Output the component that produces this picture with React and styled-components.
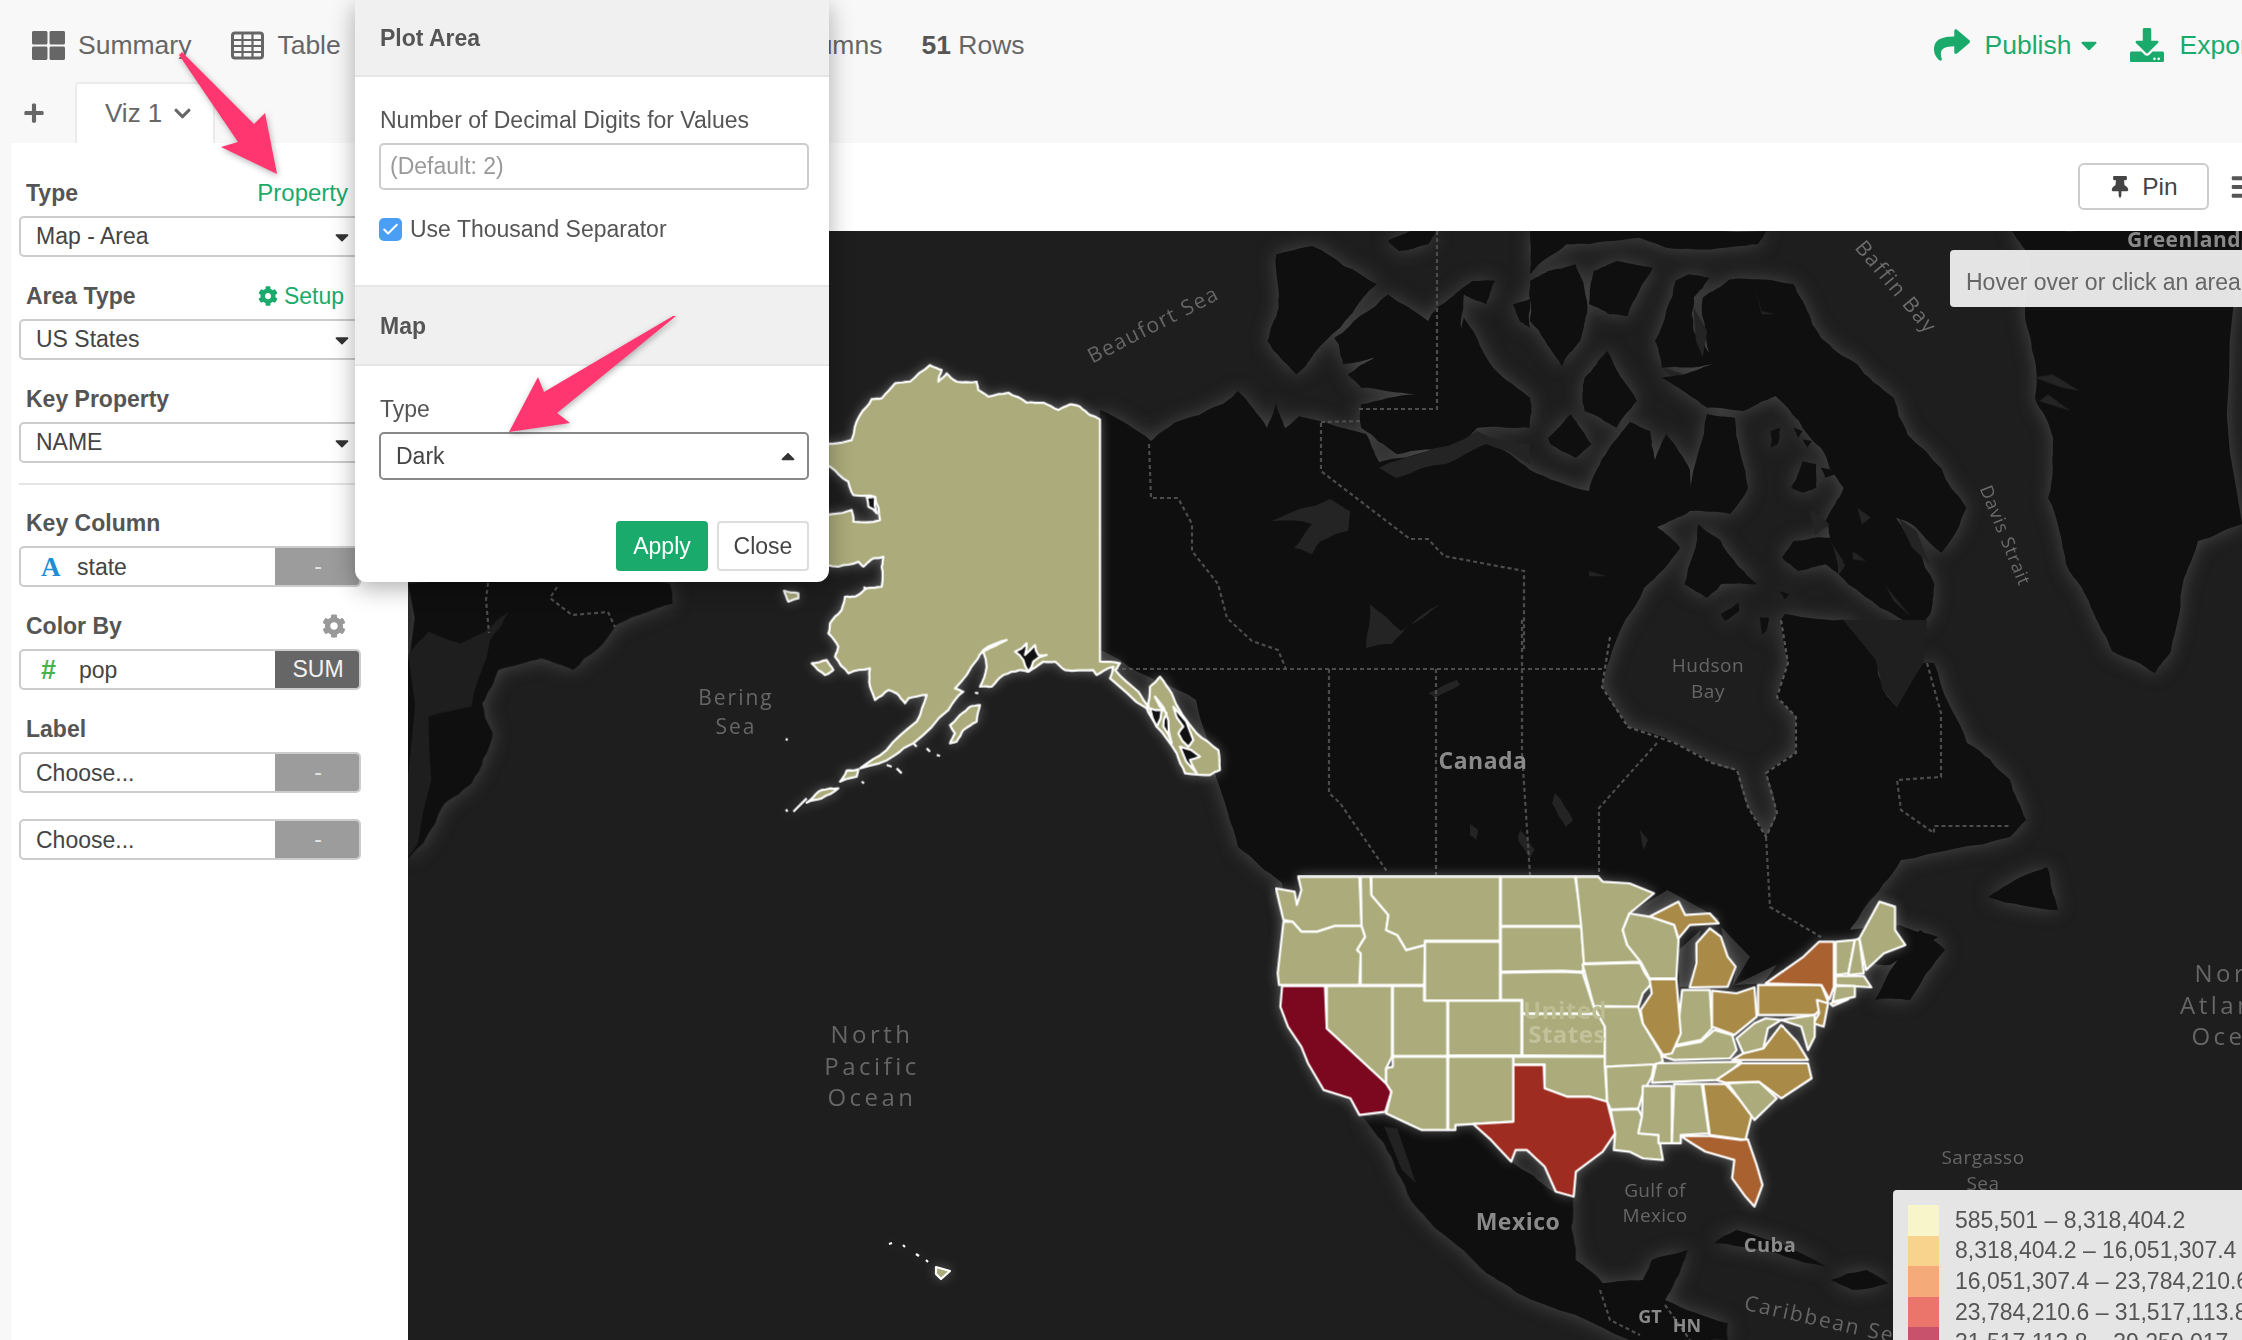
import React from "react";
import styled, { createGlobalStyle } from "styled-components";
import {
  FaThLarge, FaPlus, FaChevronDown, FaShare, FaCaretDown, FaCaretUp,
  FaDownload, FaCog, FaThumbtack, FaBars,
} from "react-icons/fa";
import { Check } from "lucide-react";

const GREEN = "#1aab6c";

const Global = createGlobalStyle`
  html, body { margin: 0; padding: 0; background: #f8f8f8; }
  body { font-family: "Liberation Sans", Arial, sans-serif; overflow: hidden; }
  * { box-sizing: border-box; }
`;

const Page = styled.div`
  position: relative;
  width: 2242px;
  height: 1340px;
  overflow: hidden;
  display: flex;
  flex-direction: column;
  background: #f8f8f8;
`;

/* ---------- top bars ---------- */
const TopBar = styled.header`
  height: 82px;
  flex: none;
  display: flex;
  align-items: center;
  padding: 8px 0 0 32px;
  font-size: 26.5px;
  color: #666;
  white-space: nowrap;
`;
const NavItem = styled.div`
  display: flex;
  align-items: center;
  gap: 13px;
  margin-right: 40px;
  svg { width: 33px; height: 33px; color: #666; flex: none; }
`;
const Stats = styled.div`
  display: flex;
  gap: 39px;
  margin-left: 375px;
  b { color: #555; }
`;
const RightActions = styled.div`
  display: flex;
  gap: 28px;
  flex: none;
  margin-left: 909px;
  color: ${GREEN};
`;
const ActionItem = styled.div`
  display: flex;
  align-items: center;
  gap: 15px;
`;
const ShareIcon = styled(FaShare)`
  font-size: 36px;
`;
const DownloadIcon = styled(FaDownload)`
  font-size: 34px;
`;
const PublishCaret = styled(FaCaretDown)`
  font-size: 26px;
  margin-left: -10px;
`;
const TabRow = styled.div`
  height: 61px;
  flex: none;
  display: flex;
  align-items: flex-end;
  padding-left: 23px;
`;
const AddTab = styled.div`
  width: 52px;
  height: 60px;
  display: flex;
  align-items: center;
  color: #666;
  font-size: 22px;
`;
const Tab = styled.div`
  width: 140px;
  height: 61px;
  display: flex;
  align-items: center;
  gap: 11px;
  padding-left: 28px;
  background: #fff;
  border: 2px solid #ebebeb;
  border-bottom: none;
  border-radius: 4px 4px 0 0;
  font-size: 26px;
  color: #666;
  svg { font-size: 19px; }
`;
const Body = styled.div`
  flex: 1;
  display: flex;
  margin-left: 11px;
  min-height: 0;
`;

/* ---------- sidebar ---------- */
const Sidebar = styled.aside`
  width: 397px;
  flex: none;
  background: #fff;
  padding: 35px 0 0 8px;
  display: flex;
  flex-direction: column;
  gap: 24px;
`;
const Field = styled.div`
  display: flex;
  flex-direction: column;
  gap: 8px;
  width: 342px;
  margin-top: ${(p) => p.$mt || 0}px;
`;
const LabelRow = styled.div`
  height: 30px;
  display: flex;
  align-items: center;
  justify-content: space-between;
  padding: 0 ${(p) => p.$pad || 5}px 0 7px;
`;
const FieldLabel = styled.span`
  font-size: 23px;
  font-weight: 700;
  color: #555;
`;
const GreenLink = styled.span`
  display: flex;
  align-items: center;
  gap: 6px;
  font-size: ${(p) => p.$size || 23}px;
  color: ${GREEN};
  svg { font-size: 20px; }
`;
const GearGrey = styled.span`
  display: flex;
  color: #999;
  font-size: 24px;
`;
const SelectBox = styled.div`
  height: 41px;
  display: flex;
  align-items: center;
  justify-content: space-between;
  padding: 0 6px 0 15px;
  background: #fff;
  border: 2px solid #ccc;
  border-radius: 5px;
  font-size: 23px;
  color: #444;
  svg { font-size: 22px; color: #333; }
`;
const Divider = styled.hr`
  width: 342px;
  height: 2px;
  margin: -4px 0 -1px;
  border: 0;
  background: #e5e5e5;
`;
const Group = styled.div`
  height: 41px;
  display: flex;
  border: 2px solid #ccc;
  border-radius: 5px;
  font-size: 23px;
  color: #444;
  overflow: hidden;
`;
const GroupMain = styled.div`
  flex: 1;
  display: flex;
  align-items: center;
  padding: 1px 0 0 ${(p) => (p.$type ? 20 : 15)}px;
  gap: 16px;
`;
const GroupAddon = styled.div`
  width: 86px;
  margin: -2px -2px -2px 0;
  display: flex;
  align-items: center;
  justify-content: center;
  background: ${(p) => (p.$dark ? "#666" : "#9c9c9c")};
  color: ${(p) => (p.$dark ? "#f2f2f2" : "#e4e4e4")};
`;
const TypeA = styled.span`
  font-family: "Liberation Serif", serif;
  font-weight: 700;
  font-size: 27px;
  color: #1e8fd6;
  width: 20px;
`;
const TypeHash = styled.span`
  font-weight: 700;
  font-size: 27px;
  color: #46b24c;
  width: 22px;
`;

/* ---------- main column ---------- */
const Main = styled.main`
  flex: 1;
  display: flex;
  flex-direction: column;
  min-width: 0;
`;
const Toolbar = styled.div`
  height: 88px;
  flex: none;
  background: #fff;
  display: flex;
  align-items: center;
  justify-content: flex-end;
  padding: 0;
  margin-right: -20px;
  gap: 21px;
`;
const PinButton = styled.button`
  width: 131px;
  height: 47px;
  margin-top: -1px;
  display: flex;
  align-items: center;
  justify-content: center;
  gap: 11px;
  background: #fff;
  border: 2px solid #ccc;
  border-radius: 6px;
  font: 24.5px "Liberation Sans", Arial, sans-serif;
  color: #444;
  svg { font-size: 22px; }
`;
const MenuIcon = styled.span`
  display: flex;
  width: 32px;
  font-size: 28px;
  color: #555;
`;
const MapArea = styled.section`
  position: relative;
  flex: 1;
  overflow: hidden;
  background: #1e1e1e;
`;
const MapSvg = styled.svg`
  display: block;
  width: 100%;
  height: 100%;
`;
const HoverBox = styled.div`
  position: absolute;
  left: 1542px;
  top: 19px;
  width: 320px;
  height: 57px;
  display: flex;
  align-items: center;
  padding: 7px 0 0 16px;
  background: rgba(236, 236, 236, 0.96);
  border-radius: 4px 0 0 4px;
  font-size: 23px;
  color: #666;
  white-space: nowrap;
`;
const Legend = styled.div`
  position: absolute;
  left: 1485px;
  top: 959px;
  width: 380px;
  height: 200px;
  padding: 15px 0 0 15px;
  background: rgba(235, 235, 235, 0.97);
  border-radius: 4px 0 0 0;
  font-size: 23px;
  color: #555;
  white-space: nowrap;
`;
const LegendRow = styled.div`
  height: 30.6px;
  display: flex;
  align-items: center;
  gap: 16px;
`;
const Swatch = styled.span`
  width: 31px;
  height: 100%;
  background: ${(p) => p.$c};
`;

/* ---------- popover ---------- */
const Popover = styled.div`
  position: absolute;
  left: 355px;
  top: 0;
  width: 474px;
  height: 582px;
  background: #fff;
  border-radius: 0 0 12px 12px;
  box-shadow: 0 6px 24px rgba(0, 0, 0, 0.32);
  display: flex;
  flex-direction: column;
  color: #555;
  font-size: 23px;
`;
const PopHeader = styled.div`
  height: ${(p) => p.$h}px;
  flex: none;
  display: flex;
  align-items: center;
  padding: 2px 0 0 25px;
  background: #f0f0f0;
  border-top: ${(p) => (p.$top ? "2px solid #e6e6e6" : "none")};
  border-bottom: 2px solid #e6e6e6;
  font-weight: 700;
  font-size: 23px;
  color: #555;
`;
const PopBody = styled.div`
  flex: ${(p) => (p.$grow ? 1 : "none")};
  height: ${(p) => (p.$h ? `${p.$h}px` : "auto")};
  padding: ${(p) => p.$top}px 20px 0 24px;
  display: flex;
  flex-direction: column;
`;
const PopLabel = styled.label`
  height: 26px;
  line-height: 26px;
  margin-bottom: 10px;
  padding-left: 1px;
`;
const TextInput = styled.div`
  height: 47px;
  display: flex;
  align-items: center;
  padding-left: 9px;
  border: 2px solid #ccc;
  border-radius: 5px;
  color: #999;
`;
const CheckRow = styled.div`
  display: flex;
  align-items: center;
  gap: 8px;
  margin-top: 26px;
`;
const CheckBox = styled.span`
  width: 23px;
  height: 23px;
  display: flex;
  align-items: center;
  justify-content: center;
  background: #4a9ff5;
  border-radius: 5px;
  color: #fff;
`;
const OpenSelect = styled.div`
  height: 48px;
  display: flex;
  align-items: center;
  justify-content: space-between;
  padding: 0 8px 0 15px;
  border: 2px solid #888;
  border-radius: 5px;
  color: #444;
  svg { font-size: 22px; color: #333; }
`;
const ButtonRow = styled.div`
  display: flex;
  justify-content: flex-end;
  gap: 9px;
  margin-top: 41px;
`;
const ApplyButton = styled.button`
  width: 92px;
  height: 50px;
  background: ${GREEN};
  color: #fff;
  border: none;
  border-radius: 4px;
  font: 23px "Liberation Sans", Arial, sans-serif;
`;
const CloseButton = styled.button`
  width: 92px;
  height: 50px;
  background: #fff;
  color: #444;
  border: 2px solid #ddd;
  border-radius: 4px;
  font: 23px "Liberation Sans", Arial, sans-serif;
`;

/* ---------- annotation arrows ---------- */
const ArrowLayer = styled.svg`
  position: absolute;
  left: 0;
  top: 0;
  width: 800px;
  height: 500px;
  pointer-events: none;
  filter: drop-shadow(1px 2px 3px rgba(0, 0, 0, 0.3));
`;

/* ---------- map drawing ---------- */
const LandGroup = styled.g`
  fill: #0f0f0f;
  filter: drop-shadow(0 0 9px rgba(115, 115, 115, 0.5));
`;
const WaterGroup = styled.g`
  fill: #242424;
`;
const Border = styled.polyline`
  fill: none;
  stroke: #4c4c4c;
  stroke-width: 2.2;
  stroke-dasharray: 4 3;
`;
const CoastDots = styled(Border)`
  stroke: #555;
`;
const StatesGroup = styled.g`
  filter: drop-shadow(0 0 6px rgba(255, 255, 255, 0.3));
  polygon, polyline {
    stroke: #fff;
    stroke-width: 2.2;
    stroke-linejoin: round;
    vector-effect: non-scaling-stroke;
  }
`;
const MapLabel = styled.text`
  font-family: "Open Sans", "Noto Sans", sans-serif;
  font-size: ${(p) => p.$s || 20}px;
  font-weight: ${(p) => (p.$b ? 700 : 400)};
  letter-spacing: ${(p) => (p.$ls === undefined ? 1.5 : p.$ls)}px;
  fill: ${(p) => p.$c || (p.$b ? "#8a8a8a" : "#666")};
  text-anchor: middle;
  dominant-baseline: middle;
`;

const TableIcon = () => (
  <svg viewBox="0 0 33 28" fill="none" stroke="#666">
    <rect x="1.5" y="1.5" width="30" height="25" rx="2.5" strokeWidth="3" />
    <path d="M11.5 2v24M21.5 2v24M2 8.5h29M2 14.5h29M2 20.5h29" strokeWidth="2.2" />
  </svg>
);

/* deterministic coastline roughening; edges longer than maxLen stay straight */
function rough(str, depth = 3, amp = 0.1, seed = 7, maxLen = Infinity) {
  let s = seed * 1237 + 11;
  const rnd = () => {
    s = (s * 16807) % 2147483647;
    return s / 2147483647 - 0.5;
  };
  let pts = str.trim().split(/\s+/).map((p) => p.split(",").map(Number));
  for (let d = 0; d < depth; d++) {
    const next = [];
    pts.forEach((a, i) => {
      const b = pts[(i + 1) % pts.length];
      const dx = b[0] - a[0];
      const dy = b[1] - a[1];
      next.push(a);
      if (Math.hypot(dx, dy) > maxLen) return;
      const r = rnd() * amp * 2;
      next.push([a[0] + dx / 2 - dy * r, a[1] + dy / 2 + dx * r]);
    });
    pts = next;
  }
  return pts.map((p) => `${p[0].toFixed(1)},${p[1].toFixed(1)}`).join(" ");
}

/* page coordinates */
const LAND = [
  "1100,410 1151,441 1174,423 1223,404 1238,391 1267,428 1276,404 1285,428 1299,416 1321,421 1366,434 1379,462 1486,440 1530,470 1589,491 1608,450 1630,422 1650,431 1655,460 1666,434 1690,470 1690,491 1707,414 1735,418 1748,488 1730,514 1690,511 1657,527 1680,548 1644,588 1612,651 1602,687 1628,727 1675,743 1712,763 1737,770 1748,807 1766,837 1777,813 1766,773 1796,753 1796,717 1777,697 1788,663 1781,620 1785,614 1850,620 1876,660 1883,690 1897,707 1923,663 1934,663 1967,743 2010,780 2026,820 2010,837 1901,860 1865,907 1850,930 1900,925 1938,937 1890,965 1840,960 1780,1000 1500,1050 1290,960 1282,883 1238,847 1216,777 1196,700 1120,660 1100,650",
  "2012,231 2242,231 2242,524 2198,541 2184,578 2171,651 2155,673 2112,651 2094,614 2066,564 2048,498 2053,438 2035,398 2035,361 2025,314 2030,260",
  "2003,887 2047,867 2058,910 1988,897",
  "1875,1000 1920,930 1945,950 1910,1000",
];
/* traced on crop at (830,231) */
const LAND_WEST = [
  "1000,70 1080,45 1225,160 1110,330 1045,430 980,330 1005,230",
  "1130,320 1250,190 1340,270 1360,230 1400,190 1440,150 1490,150 1470,220 1420,190 1410,360 1420,260 1500,430 1568,500 1568,590 1450,590 1400,650 1270,670 1190,590 1190,520 1310,490 1190,470 1160,430 1220,380 1150,400 1140,340",
  "1250,30 1300,0 1360,0 1340,40 1275,60",
  "1530,220 1568,205 1568,290 1545,270",
];
/* traced on crop at (1530,231) */
const LAND_EAST = [
  "0,150 40,120 100,100 125,250 110,330 70,405 20,300 0,270",
  "140,120 190,90 270,110 215,255 175,250 130,220",
  "275,330 320,150 350,130 395,140 360,200 360,300 400,380 400,400 290,410",
  "380,200 440,145 490,145 580,160 610,240 640,320 720,400 800,500 830,610 960,830 905,965 840,880 805,860 890,1060 880,1150 850,1190 700,1060 650,1000 590,1020 555,980 580,930 660,920 650,870 690,770 640,650 540,495 470,540 390,530 290,440 340,430 400,400",
  "120,440 170,360 235,510 190,590 120,540",
  "40,620 90,550 135,640 100,680 45,640",
  "0,130 0,0 520,0 500,40 430,50 300,50 240,20 180,30 80,40",
  "370,880 420,930 470,1020 500,1060 420,1060 390,1100 340,1060",
  "420,1150 460,1115 460,1140 430,1170",
  "505,1160 525,1160 520,1200 510,1210",
  "550,1080 570,1090 560,1105",
  "575,770 600,690 630,700 630,770 600,785",
  "640,710 660,715 670,730 650,740",
  "530,600 550,590 545,640 530,650",
  "580,590 600,600 590,620",
  "600,625 620,630 610,650",
];
const WATER_EAST = [
  "720,830 750,860 730,880",
  "710,960 740,990 710,985",
  "780,1060 840,1160 800,1110",
  "810,860 850,900 880,1000 840,950",
  "490,145 510,250 540,250 510,240",
  "360,230 390,300 380,380 365,330",
  "290,410 340,430 310,435",
  "1110,440 1150,430 1210,480 1170,470",
  "1120,510 1190,540 1140,490",
  "130,1020 170,1035 130,1035",
];
const MEXICO = "250,800 305,795 385,840 500,825 585,935 680,1025 725,1040 720,1130 730,1230 790,1300 880,1290 900,1230 980,1200 950,1300 930,1350 1070,1420 1070,1470 850,1470 600,1330 530,1270 420,1140 360,1050 300,880";
const CUBA = "1040,1180 1090,1140 1180,1175 1290,1250 1200,1220 1100,1190";
const HISPANIOLA = "1300,1290 1380,1260 1430,1300 1350,1320";
const ASIA = "762,250 1250,250 1255,310 1200,340 1150,375 1070,510 1010,475 930,510 900,610 920,700 880,850 830,910 790,1030 762,1075";
const OKHOTSK = "762,465 800,395 860,430 905,395 950,335 915,420 880,620 800,650 780,1030 762,1070";

const LAKES = [
  "1272,521 1330,499 1350,511 1348,531 1321,541 1312,554 1294,548 1312,524",
  "1370,604 1401,631 1441,604 1406,627 1392,644 1366,648",
  "1379,468 1419,454 1477,431 1530,444 1530,464 1486,444 1446,464 1397,478",
  "1428,693 1457,680 1460,685 1435,698",
  "1555,793 1573,820 1566,827 1552,803",
  "1470,824 1478,830 1476,840 1470,835",
  "1520,830 1535,850 1530,858 1518,840",
  "1640,830 1648,840 1644,850",
  "1830,540 1845,566 1838,575",
  "1810,510 1830,525 1815,535",
];
const LAKES_STATES = [
  "855,185 935,120 1050,205 1050,225 985,225 960,160 895,200",
  "960,300 1010,240 1000,300 985,410 962,410",
  "1055,230 1120,320 1080,410 1090,350 1070,320",
  "1085,405 1170,350 1180,345 1150,400",
];

const BASE = "#abab7b", MID = "#a98a47", HOT = "#a9612f", RED = "#9f2c20", DEEP = "#7c0820";
const STATES = [
  [BASE, "108,80 245,80 250,228 190,228 150,245 115,245 95,215 75,210 58,115 100,125 105,165 115,120"],
  [BASE, "75,215 95,215 115,245 150,245 190,228 250,228 258,260 240,300 248,310 245,405 65,405 62,370"],
  [DEEP, "72,408 168,408 172,535 305,700 317,725 303,785 245,795 225,745 165,720 130,640 115,590 85,530 68,470"],
  [BASE, "172,408 318,408 318,620 305,655 305,700 172,535"],
  [BASE, "248,80 270,80 272,135 310,195 305,240 330,255 350,300 392,285 390,405 248,405 248,310 240,300 258,260 250,228"],
  [BASE, "272,80 560,80 560,272 392,272 392,285 350,300 330,255 305,240 310,195 272,135"],
  [BASE, "392,275 560,275 560,452 392,452"],
  [BASE, "320,408 390,408 390,452 442,452 442,618 320,618"],
  [BASE, "444,452 608,452 608,616 444,616"],
  [BASE, "320,620 442,620 442,840 385,840 305,790 317,725 305,700 305,655 320,650"],
  [BASE, "444,620 590,620 590,815 460,825 460,840 444,840"],
  [BASE, "562,80 728,80 745,228 562,228"],
  [BASE, "562,230 742,230 748,340 745,365 700,362 562,365"],
  [BASE, "562,368 700,365 745,368 770,470 780,490 610,490 610,450 562,450"],
  [BASE, "610,492 780,492 795,530 795,618 610,616"],
  [BASE, "590,620 795,620 795,650 800,755 760,740 710,740 660,715 660,643 590,643"],
  [RED, "590,645 658,645 660,715 710,740 760,740 800,755 818,850 790,905 730,965 725,1040 685,1025 660,950 620,900 595,900 585,935 540,870 500,822 590,815"],
  [BASE, "730,80 780,80 790,95 850,100 905,130 850,190 835,240 845,285 875,335 748,340 742,230"],
  [BASE, "745,343 873,338 885,370 900,400 880,430 870,470 770,468"],
  [BASE, "770,470 870,470 880,520 920,610 925,635 905,645 795,650 795,530"],
  [BASE, "797,650 905,643 900,680 880,730 870,775 808,778 800,755"],
  [BASE, "808,780 870,778 878,800 870,850 915,855 925,930 880,925 850,905 815,900 818,850"],
  [BASE, "880,708 945,708 945,880 915,880 915,855 870,850 878,800"],
  [BASE, "950,702 1012,702 1028,850 965,855 965,880 945,880"],
  [BASE, "910,640 1100,635 1080,660 1045,690 900,698"],
  [MID, "1015,702 1065,702 1125,790 1110,870 1030,855"],
  [BASE, "1070,700 1140,695 1180,745 1130,810"],
  [MID, "1045,690 1100,640 1250,640 1258,685 1190,745 1140,695 1065,698"],
  [HOT, "965,858 1030,858 1100,870 1115,868 1135,945 1148,1005 1130,1070 1110,1040 1080,985 1085,930 1020,905 990,880"],
  [MID, "1080,630 1105,610 1150,595 1190,525 1225,575 1250,630"],
  [BASE, "1090,565 1130,520 1155,505 1190,510 1160,535 1150,595 1105,610"],
  [BASE, "925,620 950,590 1010,575 1040,540 1080,555 1090,600 1075,625 950,630"],
  [BASE, "968,420 1030,420 1035,535 1010,570 955,585"],
  [MID, "895,388 955,388 965,550 945,610 925,615 880,520 875,480 900,430"],
  [MID, "1035,422 1090,430 1130,412 1135,500 1085,555 1035,530"],
  [MID, "985,412 1000,340 1000,280 1030,235 1055,260 1070,320 1088,350 1070,410"],
  [MID, "895,200 960,155 975,195 1030,190 1050,220 985,225 960,265 950,225"],
  [BASE, "850,190 895,200 950,225 960,270 955,385 895,385 875,335 845,285 835,240"],
  [MID, "1138,405 1280,405 1295,455 1265,495 1138,495"],
  [HOT, "1155,400 1240,320 1275,275 1308,275 1308,410 1298,448 1280,405"],
  [MID, "1270,450 1295,460 1285,530 1262,520 1275,490"],
  [BASE, "1190,510 1265,495 1265,560 1250,600 1235,530"],
  [BASE, "1312,275 1355,270 1340,370 1312,375"],
  [BASE, "1355,270 1365,265 1375,370 1340,375"],
  [BASE, "1365,265 1410,155 1445,170 1445,240 1468,285 1420,310 1380,360"],
  [BASE, "1312,378 1375,378 1392,412 1312,405"],
  [BASE, "1312,408 1355,408 1355,440 1305,455"],
  [HOT, "1300,460 1340,448 1305,468"],
];
const ALASKA = [
  "100,285 215,270 240,195 275,147 305,145 345,100 390,95 450,45 485,60 475,95 500,70 530,95 590,95 595,120 625,140 685,128 740,158 790,158 835,180 870,163 900,170 930,195 960,208 960,935 1020,940 1005,960 1075,1025 1105,1075 1110,1010 1140,980 1175,1030 1250,1150 1315,1200 1320,1260 1290,1275 1215,1270 1190,1210 1130,1130 1100,1075 990,985 1000,950 950,975 940,960 855,960 825,935 790,935 745,965 720,960 670,975 635,1010 600,1010 620,950 610,905 680,870 610,900 590,930 525,1015 550,1025 505,1080 400,1180 345,1215 240,1255 320,1200 410,1115 440,1035 385,1045 375,1060 350,1030 325,1020 285,1050 270,1010 270,955 205,970 165,920 175,890 145,850 150,820 185,780 195,740 225,740 260,715 305,710 305,650 310,620 280,625 250,650 235,635 175,650 100,640 100,500 215,480 220,515 300,510 285,440 220,435 205,395 150,350 100,320",
  "510,1125 540,1095 570,1070 600,1065 590,1115 550,1140 530,1175 510,1180 525,1150",
  "95,940 140,930 160,960 135,975",
  "12,722 55,730 55,745 25,755",
  "180,1295 200,1262 235,1258 230,1280",
  "80,1358 115,1325 125,1320 175,1315 125,1345",
];
const ALASKA_CUTS = [
  "705,905 740,880 735,915 765,885 775,915 800,915 760,935 745,965 730,930",
  "1125,1040 1160,1090 1150,1130 1175,1180 1165,1110",
  "1180,1070 1210,1130 1195,1150 1225,1190 1240,1170",
  "1200,1190 1250,1270 1230,1230 1260,1220",
  "1110,1075 1145,1080 1130,1130",
  "260,440 285,440 290,490 265,470",
];
const ALASKA_SPECKS = [
  "18,1378 22,1385", "40,1385 80,1345", "20,1165 20,1172",
  "245,1295 252,1300", "320,1245 335,1250", "350,1255 365,1270",
  "440,1195 450,1205", "480,1218 470,1215", "400,1180 410,1190",
  "250,712 258,714", "585,1028 595,1030",
];
const TRAILS = [
  "1149,444 1151,498 1178,498 1192,524 1192,551 1218,584 1227,618 1252,641 1278,650 1286,669",
  "1321,423 1321,471 1410,539 1428,539 1444,556 1524,571 1524,651",
  "1321,422 1363,421",
  "1359,409 1437,409 1437,231",
  "1115,669 1602,669",
  "1329,669 1329,793 1340,803 1388,873",
  "1436,669 1436,875",
  "1522,620 1522,753 1530,875",
  "1657,743 1599,808 1599,873",
  "1766,837 1770,907 1821,937",
  "1927,663 1941,713 1941,777 1897,780 1901,810 1934,833 1934,826 2010,826",
  "488,583 486,600 489,633",
  "557,587 550,598 572,615 608,612 615,627",
  "1600,1290 1610,1320 1640,1335",
  "1665,1305 1690,1340",
];

const MapDrawing = () => (
  <MapSvg viewBox="408 231 1834 1109" preserveAspectRatio="none">
    <LandGroup>
      {LAND.map((p, i) => (
        <polygon key={i} points={rough(p, 3, 0.045, i + 11)} />
      ))}
      <g transform="translate(830 231) scale(.4464 .3333)">
        {LAND_WEST.map((p, i) => (
          <polygon key={i} points={rough(p, 3, 0.05, i + 41)} />
        ))}
      </g>
      <g transform="translate(1530 231) scale(.4545 .3333)">
        {LAND_EAST.map((p, i) => (
          <polygon key={i} points={rough(p, 3, 0.05, i + 61)} />
        ))}
      </g>
      <g transform="translate(0 500) scale(.5357 .3333)">
        <polygon points={rough(ASIA, 3, 0.05, 5)} />
      </g>
      <g transform="translate(1250 850) scale(.4464 .3333)">
        <polygon points={rough(MEXICO, 3, 0.04, 9)} />
        <polygon points={rough(CUBA, 2, 0.05, 3)} />
        <polygon points={rough(HISPANIOLA, 2, 0.06, 4)} />
      </g>
    </LandGroup>
    <WaterGroup>
      <g transform="translate(1530 231) scale(.4545 .3333)">
        {WATER_EAST.map((p, i) => (
          <polygon key={i} points={p} />
        ))}
      </g>
      <g transform="translate(0 500) scale(.5357 .3333)">
        <polygon points={rough(OKHOTSK, 2, 0.04, 6)} fill="#1e1e1e" />
      </g>
      <g transform="translate(1250 850) scale(.4464 .3333)">
        <polygon points="300,830 330,835 372,1000 340,960" fill="#222" />
      </g>
      {LAKES.map((p, i) => (
        <polygon key={i} points={rough(p, 2, 0.06, i + 31)} />
      ))}
      <polygon points="1843,620 1876,660 1883,690 1897,707 1923,663 1927,620" fill="#1f1f1f" />
    </WaterGroup>
    <g transform="translate(1250 850) scale(.4464 .3333)">
      {LAKES_STATES.map((p, i) => (
        <polygon key={i} points={p} fill="#333" />
      ))}
    </g>
    {TRAILS.map((p, i) => (
      <Border key={i} points={p} />
    ))}
    <CoastDots points="1610,637 1602,687 1628,727 1675,743 1712,763 1737,770 1748,807 1766,837 1777,813 1766,773 1796,753 1796,717 1777,697 1788,663 1781,620" />

    <MapLabel x="1154" y="326" $s={21} transform="rotate(-27 1154 326)">Beaufort Sea</MapLabel>
    <MapLabel x="1895" y="288" $s={21} $c="#6c6c6c" transform="rotate(50 1895 288)">Baffin Bay</MapLabel>
    <MapLabel x="2004" y="536" $s={18} $ls={1} $c="#6c6c6c" transform="rotate(68 2004 536)">Davis Strait</MapLabel>
    <MapLabel x="2184" y="241" $s={21} $ls={0.5} $b>Greenland</MapLabel>
    <MapLabel x="736" y="699" $s={21} $ls={2}>Bering</MapLabel>
    <MapLabel x="736" y="728" $s={21} $ls={2}>Sea</MapLabel>
    <MapLabel x="872" y="1037" $s={24} $ls={3.5}>North</MapLabel>
    <MapLabel x="872" y="1069" $s={24} $ls={3.5}>Pacific</MapLabel>
    <MapLabel x="872" y="1100" $s={24} $ls={3.5}>Ocean</MapLabel>
    <MapLabel x="1708" y="667" $s={19} $ls={0.5}>Hudson</MapLabel>
    <MapLabel x="1708" y="693" $s={19} $ls={0.5}>Bay</MapLabel>
    <MapLabel x="1483" y="763" $s={23} $ls={0.5} $b>Canada</MapLabel>
    <MapLabel x="1518" y="1224" $s={23} $ls={0.5} $b>Mexico</MapLabel>
    <MapLabel x="1655" y="1192" $s={19} $ls={0.3}>Gulf of</MapLabel>
    <MapLabel x="1655" y="1217" $s={19} $ls={0.3}>Mexico</MapLabel>
    <MapLabel x="1770" y="1247" $s={20} $ls={0.5} $b>Cuba</MapLabel>
    <MapLabel x="1826" y="1322" $s={21} $ls={2} transform="rotate(12.5 1826 1322)">Caribbean Sea</MapLabel>
    <MapLabel x="1650" y="1318" $s={18} $ls={0} $b>GT</MapLabel>
    <MapLabel x="1687" y="1327" $s={18} $ls={0} $b>HN</MapLabel>
    <MapLabel x="1983" y="1159" $s={19} $ls={0.5}>Sargasso</MapLabel>
    <MapLabel x="1983" y="1185" $s={19} $ls={0.5}>Sea</MapLabel>
    <MapLabel x="2236" y="976" $s={24} $ls={3.5}>North</MapLabel>
    <MapLabel x="2236" y="1008" $s={24} $ls={3.5}>Atlantic</MapLabel>
    <MapLabel x="2236" y="1039" $s={24} $ls={3.5}>Ocean</MapLabel>

    <StatesGroup>
      <g transform="translate(780 350) scale(.3333)">
        {ALASKA.map((p, i) => (
          <polygon key={i} points={rough(p, 2, 0.06, i + 81, 260)} fill={BASE} />
        ))}
        {ALASKA_CUTS.map((p, i) => (
          <polygon key={i} points={rough(p, 1, 0.1, i + 91)} fill="#111" />
        ))}
        {ALASKA_SPECKS.map((p, i) => (
          <polyline key={i} points={p} fill="none" />
        ))}
      </g>
      <g transform="translate(1250 850) scale(.4464 .3333)">
        {STATES.map(([c, p], i) => (
          <polygon key={i} points={p} fill={c} />
        ))}
      </g>
      <polygon points="936,1267 950,1271 941,1279 936,1274" fill={BASE} />
      <polyline points="889,1244 892,1243" fill="none" />
      <polyline points="903,1245 905,1247" fill="none" />
      <polyline points="916,1254 919,1256" fill="none" />
      <polyline points="926,1260 928,1262" fill="none" />
    </StatesGroup>
    <MapLabel x="1565" y="1013" $s={24} $ls={0.5} $b $c="#bdbd93">United</MapLabel>
    <MapLabel x="1567" y="1037" $s={24} $ls={0.5} $b $c="#c2c29a">States</MapLabel>
  </MapSvg>
);

const LEGEND = [
  ["#f8f5cb", "585,501 – 8,318,404.2"],
  ["#f7d38d", "8,318,404.2 – 16,051,307.4"],
  ["#f5aa7a", "16,051,307.4 – 23,784,210.6"],
  ["#ec756b", "23,784,210.6 – 31,517,113.8"],
  ["#c8516b", "31,517,113.8 – 39,250,017"],
];

export default function App() {
  return (
    <Page>
      <Global />
      <TopBar>
        <NavItem><FaThLarge />Summary</NavItem>
        <NavItem><TableIcon />Table</NavItem>
        <Stats>
          <span><b>5</b> Columns</span>
          <span><b>51</b> Rows</span>
        </Stats>
        <RightActions>
          <ActionItem><ShareIcon /><span>Publish</span><PublishCaret /></ActionItem>
          <ActionItem><DownloadIcon /><span>Export</span></ActionItem>
        </RightActions>
      </TopBar>
      <TabRow>
        <AddTab><FaPlus /></AddTab>
        <Tab>Viz 1 <FaChevronDown /></Tab>
      </TabRow>
      <Body>
        <Sidebar>
          <Field>
            <LabelRow $pad={13}>
              <FieldLabel>Type</FieldLabel>
              <GreenLink $size={24}>Property</GreenLink>
            </LabelRow>
            <SelectBox>Map - Area<FaCaretDown /></SelectBox>
          </Field>
          <Field>
            <LabelRow $pad={17}>
              <FieldLabel>Area Type</FieldLabel>
              <GreenLink><FaCog />Setup</GreenLink>
            </LabelRow>
            <SelectBox>US States<FaCaretDown /></SelectBox>
          </Field>
          <Field>
            <LabelRow><FieldLabel>Key Property</FieldLabel></LabelRow>
            <SelectBox>NAME<FaCaretDown /></SelectBox>
          </Field>
          <Divider />
          <Field>
            <LabelRow><FieldLabel>Key Column</FieldLabel></LabelRow>
            <Group>
              <GroupMain $type><TypeA>A</TypeA>state</GroupMain>
              <GroupAddon>-</GroupAddon>
            </Group>
          </Field>
          <Field>
            <LabelRow $pad={15}>
              <FieldLabel>Color By</FieldLabel>
              <GearGrey><FaCog /></GearGrey>
            </LabelRow>
            <Group>
              <GroupMain $type><TypeHash>#</TypeHash>pop</GroupMain>
              <GroupAddon $dark>SUM</GroupAddon>
            </Group>
          </Field>
          <Field>
            <LabelRow><FieldLabel>Label</FieldLabel></LabelRow>
            <Group>
              <GroupMain>Choose...</GroupMain>
              <GroupAddon>-</GroupAddon>
            </Group>
          </Field>
          <Field $mt={2}>
            <Group>
              <GroupMain>Choose...</GroupMain>
              <GroupAddon>-</GroupAddon>
            </Group>
          </Field>
        </Sidebar>
        <Main>
          <Toolbar>
            <PinButton><FaThumbtack />Pin</PinButton>
            <MenuIcon><FaBars /></MenuIcon>
          </Toolbar>
          <MapArea>
            <MapDrawing />
            <HoverBox>Hover over or click an area.</HoverBox>
            <Legend>
              {LEGEND.map(([c, t]) => (
                <LegendRow key={t}><Swatch $c={c} />{t}</LegendRow>
              ))}
            </Legend>
          </MapArea>
        </Main>
      </Body>

      <Popover>
        <PopHeader $h={77}>Plot Area</PopHeader>
        <PopBody $h={208} $top={30}>
          <PopLabel>Number of Decimal Digits for Values</PopLabel>
          <TextInput>(Default: 2)</TextInput>
          <CheckRow>
            <CheckBox><Check size={19} strokeWidth={2.5} /></CheckBox>
            Use Thousand Separator
          </CheckRow>
        </PopBody>
        <PopHeader $h={81} $top>Map</PopHeader>
        <PopBody $grow $top={30}>
          <PopLabel>Type</PopLabel>
          <OpenSelect>Dark<FaCaretUp /></OpenSelect>
          <ButtonRow>
            <ApplyButton>Apply</ApplyButton>
            <CloseButton>Close</CloseButton>
          </ButtonRow>
        </PopBody>
      </Popover>

      <ArrowLayer viewBox="0 0 800 500">
        <polygon points="182,52 254,124 265,113 277,174 221,147 238,142 179,55" fill="#ff3670" />
        <polygon points="676,316 557,413 570,423 509,432 538,377 544,392 673,316" fill="#ff3670" />
      </ArrowLayer>
    </Page>
  );
}
